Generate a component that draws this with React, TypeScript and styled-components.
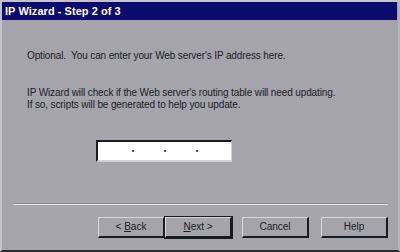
import React from "react";
import styled, { createGlobalStyle } from "styled-components";

const Global = createGlobalStyle`
  html, body { margin: 0; padding: 0; background: #a4a4aa; }
  * { box-sizing: border-box; }
`;

const Window = styled.div`
  width: 400px;
  height: 252px;
  background: #a4a4aa;
  border-top: 2px solid #c4c4c8;
  border-left: 2px solid #c4c4c8;
  border-right: 2px solid #b4b4b8;
  border-bottom: 2px solid #2a2a30;
  display: flex;
  flex-direction: column;
  font-family: "Liberation Sans", Arial, sans-serif;
  color: #1c1c28;
`;

const TitleBar = styled.div`
  height: 18px;
  margin: 0 1px 0 0;
  background: #0b0b6e;
  display: flex;
  align-items: center;
  padding-left: 3px;
`;

const Title = styled.span`
  color: #ffffff;
  font-weight: bold;
  font-size: 11px;
  letter-spacing: 0.05px;
`;

const Body = styled.div`
  flex: 1;
  display: flex;
  flex-direction: column;
  padding: 0 10px 0 25px;
`;

const Para = styled.p<{ $top: number }>`
  margin: ${(p) => p.$top}px 0 0 0;
  font-size: 10px;
  letter-spacing: -0.12px;
  line-height: 12.5px;
  white-space: pre;
`;

const IpField = styled.div`
  margin: 28px 0 0 69px;
  width: 136px;
  height: 22px;
  background: #ffffff;
  border-top: 2px solid #1a1a22;
  border-left: 2px solid #1a1a22;
  border-right: 1px solid #d0d0d4;
  border-bottom: 2px solid #d0d0d4;
  display: flex;
  align-items: center;
  justify-content: space-between;
  padding: 0 33px 0 34px;
`;

const Dot = styled.span`
  width: 2px;
  height: 2px;
  background: #55555c;
`;

const Separator = styled.div`
  margin: 41px 0 0 -14px;
  width: 375px;
  height: 2px;
  border-top: 1px solid #8a8a90;
  border-bottom: 1px solid #e4e4e8;
`;

const ButtonRow = styled.div`
  margin-top: 12px;
  display: flex;
  justify-content: flex-end;
`;

const Group = styled.div<{ $gap: number }>`
  display: flex;
  margin-left: ${(p) => p.$gap}px;
`;

const Button = styled.div<{ $default?: boolean }>`
  width: 67px;
  height: 21px;
  display: flex;
  align-items: center;
  justify-content: center;
  font-size: 10px;
  white-space: pre;
  background: #a4a4aa;
  border-top: 1px solid #d8d8dc;
  border-left: 1px solid #d8d8dc;
  border-right: 2px solid #1a1a22;
  border-bottom: 2px solid #1a1a22;
  ${(p) => (p.$default ? "outline: 1px solid #1a1a22;" : "")}
  color: #1c1c28;
`;

const U = styled.span`
  text-decoration: underline;
`;

export default function App() {
  return (
    <>
      <Global />
      <Window>
        <TitleBar>
          <Title>IP Wizard - Step 2 of 3</Title>
        </TitleBar>
        <Body>
          <Para $top={30}>{"Optional.  You can enter your Web server's IP address here."}</Para>
          <Para $top={24}>
            {"IP Wizard will check if the Web server's routing table will need updating.\nIf so, scripts will be generated to help you update."}
          </Para>
          <IpField>
            <Dot />
            <Dot />
            <Dot />
          </IpField>
          <Separator />
          <ButtonRow>
            <Group $gap={0}>
              <Button>
                {"< "}
                <U>B</U>
                {"ack"}
              </Button>
              <Button $default>
                <U>N</U>
                {"ext >"}
              </Button>
            </Group>
            <Group $gap={10}>
              <Button>Cancel</Button>
            </Group>
            <Group $gap={12}>
              <Button>Help</Button>
            </Group>
          </ButtonRow>
        </Body>
      </Window>
    </>
  );
}
